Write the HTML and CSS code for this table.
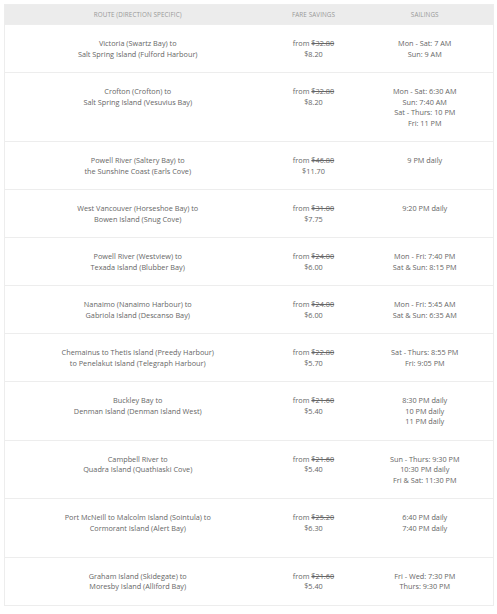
FILE: index.html
```html
<!DOCTYPE html>
<html>
<head>
<meta charset="utf-8">
<link rel="stylesheet" href="styles.css">
</head>
<body>
<table class="fares">
  <colgroup>
    <col class="c-route">
    <col class="c-fare">
    <col class="c-sail">
  </colgroup>
  <thead>
    <tr><th>Route (Direction Specific)</th><th>Fare Savings</th><th>Sailings</th></tr>
  </thead>
  <tbody>
    <tr>
      <td>Victoria (Swartz Bay) to<br>Salt Spring Island (Fulford Harbour)</td>
      <td>from <s>$32.80</s><br>$8.20</td>
      <td>Mon - Sat: 7 AM<br>Sun: 9 AM</td>
    </tr>
    <tr>
      <td>Crofton (Crofton) to<br>Salt Spring Island (Vesuvius Bay)</td>
      <td>from <s>$32.80</s><br>$8.20</td>
      <td>Mon - Sat: 6:30 AM<br>Sun: 7:40 AM<br>Sat - Thurs: 10 PM<br>Fri: 11 PM</td>
    </tr>
    <tr>
      <td>Powell River (Saltery Bay) to<br>the Sunshine Coast (Earls Cove)</td>
      <td>from <s>$46.80</s><br>$11.70</td>
      <td>9 PM daily</td>
    </tr>
    <tr>
      <td>West Vancouver (Horseshoe Bay) to<br>Bowen Island (Snug Cove)</td>
      <td>from <s>$31.00</s><br>$7.75</td>
      <td>9:20 PM daily</td>
    </tr>
    <tr>
      <td>Powell River (Westview) to<br>Texada Island (Blubber Bay)</td>
      <td>from <s>$24.00</s><br>$6.00</td>
      <td>Mon - Fri: 7:40 PM<br>Sat &amp; Sun: 8:15 PM</td>
    </tr>
    <tr>
      <td>Nanaimo (Nanaimo Harbour) to<br>Gabriola Island (Descanso Bay)</td>
      <td>from <s>$24.00</s><br>$6.00</td>
      <td>Mon - Fri: 5:45 AM<br>Sat &amp; Sun: 6:35 AM</td>
    </tr>
    <tr>
      <td>Chemainus to Thetis Island (Preedy Harbour)<br>to Penelakut Island (Telegraph Harbour)</td>
      <td>from <s>$22.80</s><br>$5.70</td>
      <td>Sat - Thurs: 8:55 PM<br>Fri: 9:05 PM</td>
    </tr>
    <tr>
      <td>Buckley Bay to<br>Denman Island (Denman Island West)</td>
      <td>from <s>$21.60</s><br>$5.40</td>
      <td>8:30 PM daily<br>10 PM daily<br>11 PM daily</td>
    </tr>
    <tr>
      <td>Campbell River to<br>Quadra Island (Quathiaski Cove)</td>
      <td>from <s>$21.60</s><br>$5.40</td>
      <td>Sun - Thurs: 9:30 PM<br>10:30 PM daily<br>Fri &amp; Sat: 11:30 PM</td>
    </tr>
    <tr>
      <td>Port McNeill to Malcolm Island (Sointula) to<br>Cormorant Island (Alert Bay)</td>
      <td>from <s>$25.20</s><br>$6.30</td>
      <td>6:40 PM daily<br>7:40 PM daily<br>&nbsp;</td>
    </tr>
    <tr>
      <td>Graham Island (Skidegate) to<br>Moresby Island (Alliford Bay)</td>
      <td>from <s>$21.60</s><br>$5.40</td>
      <td>Fri - Wed: 7:30 PM<br>Thurs: 9:30 PM</td>
    </tr>
  </tbody>
</table>
</body>
</html>
```

FILE: styles.css
```css
html, body {
  margin: 0;
  padding: 0;
  background: #fff;
}
body {
  padding: 4px 5px 0 4px;
  font-family: "Open Sans", "Liberation Sans", sans-serif;
  color: #666;
}
.fares {
  width: 489px;
  border-collapse: collapse;
  border: 1px solid #ededed;
  table-layout: fixed;
}
.c-route { width: 266px; }
.c-fare { width: 86px; }
.c-sail { width: 137px; }
.fares th {
  background: #ececec;
  color: #999;
  font-weight: 400;
  font-size: 6.3px;
  text-transform: uppercase;
  letter-spacing: 0.1px;
  line-height: 9px;
  padding: 5px 0;
  text-align: center;
}
.fares td {
  font-size: 7.3px;
  line-height: 10.5px;
  padding: 13px 0;
  text-align: center;
  vertical-align: top;
  border-top: 1px solid #ededed;
}
.fares s {
  text-decoration-thickness: 1px;
}
```
